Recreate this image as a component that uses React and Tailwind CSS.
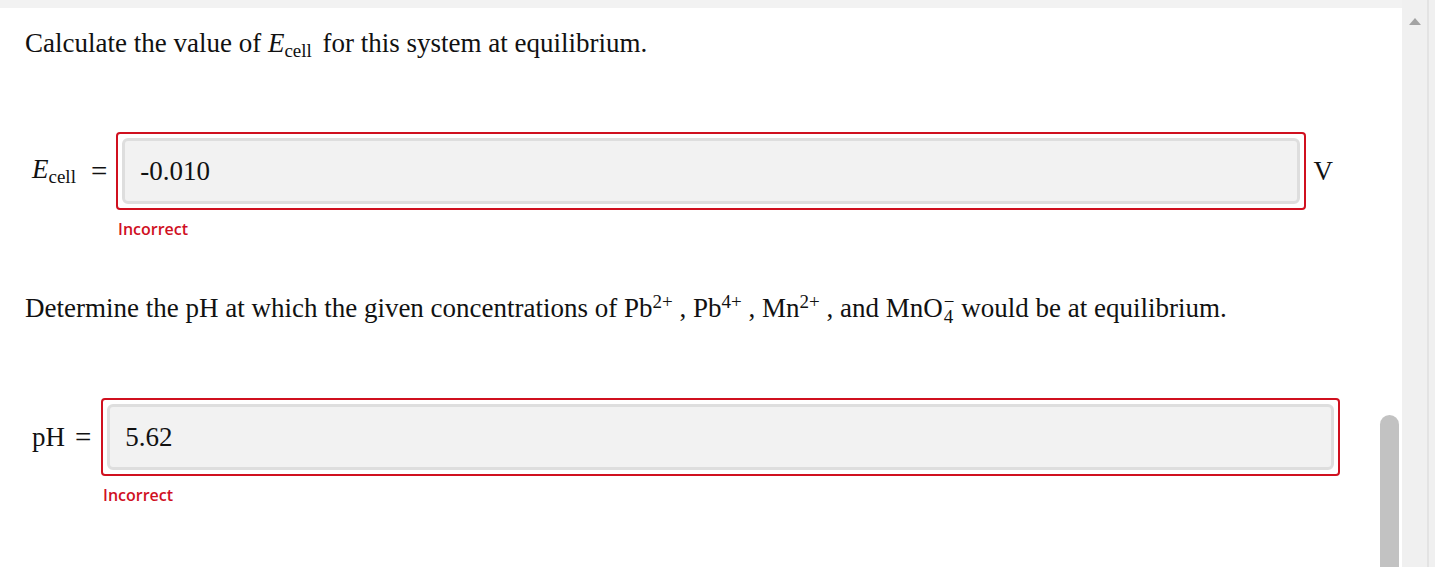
import React from 'react';

const serif = "font-['Liberation_Serif','Times_New_Roman',serif]";

function AnswerBox({ value }) {
  return (
    <div className="flex-1 rounded-[4px] border-2 border-[#d0101f] bg-white p-[4px]">
      <div className="flex h-[66px] items-center rounded-[6px] border-[3px] border-[#dedede] bg-[#f2f2f2] pl-[15px]">
        <span className={`${serif} text-[27px] leading-none text-[#111]`}>{value}</span>
      </div>
    </div>
  );
}

function Incorrect({ indent }) {
  return (
    <div
      className={`${indent} mt-[8px] h-[22px] font-['Open_Sans',sans-serif] text-[16px] font-semibold leading-[22px] text-[#d0101f]`}
    >
      Incorrect
    </div>
  );
}

export default function App() {
  return (
    <div className="flex h-[567px] w-[1435px] overflow-hidden bg-[#f2f2f2]">
      <div className="flex flex-1 flex-col">
        <div className="h-[8px] bg-[#f2f2f2]" />
        <div className="flex flex-1 bg-white">
          {/* question content */}
          <div className={`${serif} flex-1 text-[#111]`}>
            <p className="ml-[25px] mt-[20px] h-[30px] text-[27px] leading-[30px]">
              Calculate the value of <i>E</i>
              <span className="mr-[4px] align-[-5px] text-[19px]">cell</span> for this system at equilibrium.
            </p>

            <div className="mt-[74px] flex items-center pl-[32px] pr-[40px]">
              <span className="text-[27px] leading-none">
                <i>E</i>
                <span className="align-[-5px] text-[19px]">cell</span>
              </span>
              <span className="ml-[15px] mr-[9px] text-[29px] leading-none">=</span>
              <AnswerBox value="-0.010" />
              <span className="ml-[8px] mr-[7px] text-[27px] leading-none">V</span>
            </div>
            <Incorrect indent="ml-[118px]" />

            <p className="ml-[25px] mt-[53px] h-[30px] text-[27px] leading-[30px]">
              Determine the pH at which the given concentrations of Pb
              <sup className="text-[19px]">2+</sup> , Pb<sup className="text-[19px]">4+</sup> , Mn
              <sup className="text-[19px]">2+</sup> , and MnO
              <span className="ml-[1px] inline-flex flex-col align-[9px] text-[19px] leading-[15px]">
                <span>−</span>
                <span>4</span>
              </span>{' '}
              would be at equilibrium.
            </p>

            <div className="mt-[75px] flex items-center pl-[32px] pr-[40px]">
              <span className="text-[27px] leading-none">pH</span>
              <span className="ml-[10px] mr-[10px] text-[29px] leading-none">=</span>
              <AnswerBox value="5.62" />
            </div>
            <Incorrect indent="ml-[103px]" />
          </div>

          {/* inner scroll track */}
          <div className="mr-[3px] flex w-[19px] flex-col pt-[407px]">
            <div className="flex-1 rounded-t-full bg-[#c2c2c2]" />
          </div>
        </div>
      </div>

      {/* page scrollbar */}
      <div className="flex w-[33px]">
        <div className="flex w-[25px] justify-center bg-[#f0f0f0] pt-[18px]">
          <svg width="12" height="7" viewBox="0 0 12 7">
            <polygon points="6,0 12,7 0,7" fill="#a3a3a3" />
          </svg>
        </div>
        <div className="w-[2px] bg-[#e3e3e3]" />
        <div className="w-[6px] bg-[#f0f0f0]" />
      </div>
    </div>
  );
}
